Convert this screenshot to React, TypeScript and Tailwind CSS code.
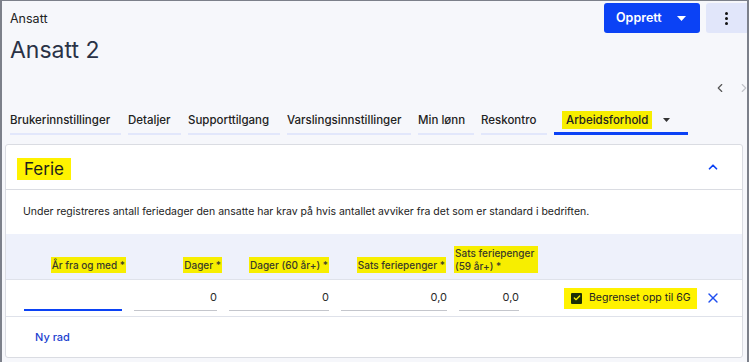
import { ChevronLeft, ChevronRight, ChevronUp, Check, X } from 'lucide-react';

const tabs = [
  { label: 'Brukerinnstillinger', w: 'w-[111px]' },
  { label: 'Detaljer', w: 'w-[53px]' },
  { label: 'Supporttilgang', w: 'w-[92px]' },
  { label: 'Varslingsinnstillinger', w: 'w-[124px]' },
  { label: 'Min lønn', w: 'w-[56px]' },
  { label: 'Reskontro', w: 'w-[66px]' },
];

function NumberInput({ value, width }: { value: string; width: string }) {
  return (
    <div className={`${width} h-[26px] flex items-center justify-end border-b border-[#c4c6cc] text-[11px] text-[#2a2a2a]`}>
      {value}
    </div>
  );
}

export default function App() {
  return (
    <div
      className="w-[749px] h-[362px] overflow-hidden bg-[#f6f7fb] border-t border-l-2 border-r-2 border-[#7c808a] text-[#222]"
      style={{ fontFamily: 'Inter, "Noto Sans", sans-serif' }}
    >
      {/* Top bar */}
      <div className="flex justify-between pt-[2px]">
        <div className="pl-[8px] pt-[8px] text-[12.5px] leading-[16px]">Ansatt</div>
        <div className="flex gap-[6px]">
          <button className="w-[96px] h-[30px] rounded-[3px] bg-[#0b42f5] text-white text-[12.5px] font-semibold flex items-center pl-[12px]">
            <span>Opprett</span>
            <svg className="ml-[15px]" width="9" height="5" viewBox="0 0 9 5">
              <path d="M0 0 H9 L4.5 5 Z" fill="white" />
            </svg>
          </button>
          <button className="w-[41px] h-[30px] rounded-l-[3px] bg-[#e1e6fa] flex flex-col items-center justify-center gap-[2px]">
            <span className="w-[3px] h-[3px] rounded-full bg-[#111]" />
            <span className="w-[3px] h-[3px] rounded-full bg-[#111]" />
            <span className="w-[3px] h-[3px] rounded-full bg-[#111]" />
          </button>
        </div>
      </div>

      <h1 className="pl-[8px] mt-[1px] text-[23px] leading-[32px] text-[#2a3246]">Ansatt 2</h1>

      {/* Scroll arrows */}
      <div className="flex justify-end items-center gap-[10px] mt-[12px] h-[20px]">
        <ChevronLeft className="w-[14px] h-[14px] text-[#555]" strokeWidth={2} />
        <ChevronRight className="w-[14px] h-[14px] text-[#c3c5cb] -mr-[4px]" strokeWidth={2} />
      </div>

      {/* Tabs */}
      <div className="flex gap-[7px] pl-[8px] mt-[10px]">
        {tabs.map((t) => (
          <div
            key={t.label}
            className={`${t.w} pt-[4px] pb-[4px] border-b-2 border-[#e2e7fb] text-[11.5px] font-medium leading-[16px] whitespace-nowrap`}
          >
            {t.label}
          </div>
        ))}
        <div className="w-[134px] pt-[3px] pb-[3px] border-b-[3px] border-[#0b42f5] flex items-center">
          <span className="ml-[8px] bg-[#f7ee00] px-[4px] h-[18px] leading-[18px] text-[11.5px] font-medium">
            Arbeidsforhold
          </span>
          <svg className="ml-[11px]" width="7" height="4" viewBox="0 0 7 4">
            <path d="M0 0 H7 L3.5 4 Z" fill="#333" />
          </svg>
        </div>
      </div>

      {/* Card */}
      <div className="ml-[3px] mt-[9px] w-[738px] h-[214px] bg-white border border-[#dadce2] rounded-[3px]">
        <div className="h-[45px] flex items-center justify-between border-b border-[#dadce2] pl-[11px] pr-[22px]">
          <span className="mt-[3px] bg-[#fff200] px-[7px] h-[22px] leading-[22px] text-[17px] text-[#1d1d1d]">Ferie</span>
          <ChevronUp className="w-[14px] h-[14px] text-[#0b42f5]" strokeWidth={3} />
        </div>

        <div className="h-[44px] flex items-center pl-[17px] text-[10.5px] text-[#222]">
          Under registreres antall feriedager den ansatte har krav på hvis antallet avviker fra det som er standard i bedriften.
        </div>

        {/* Header band */}
        <div className="h-[46px] bg-[#eef1fb] border-b border-[#dfe2ea] flex items-end pb-[6px] pl-[18px] text-[10px] font-medium text-[#3a3a2a]">
          <div className="w-[102px] flex justify-end">
            <span className="bg-[#f7ee00] px-[1px] leading-[16px]">År fra og med *</span>
          </div>
          <div className="w-[96px] flex justify-end">
            <span className="bg-[#f7ee00] px-[1px] leading-[16px]">Dager *</span>
          </div>
          <div className="w-[107px] flex justify-end">
            <span className="bg-[#f7ee00] px-[1px] leading-[16px]">Dager (60 år+) *</span>
          </div>
          <div className="w-[117px] flex justify-end">
            <span className="bg-[#f7ee00] px-[1px] leading-[16px]">Sats feriepenger *</span>
          </div>
          <div className="ml-[8px] w-[84px] bg-[#f7ee00] px-[1px] leading-[12.5px] py-[1px]">
            Sats feriepenger (59 år+) *
          </div>
        </div>

        {/* Row */}
        <div className="h-[37px] border-b border-[#dfe2ea] flex items-center pl-[18px]">
          <div className="w-[98px] h-[26px] border-b-2 border-[#0b42f5]" />
          <div className="ml-[12px]">
            <NumberInput value="0" width="w-[83px]" />
          </div>
          <div className="ml-[12px]">
            <NumberInput value="0" width="w-[100px]" />
          </div>
          <div className="ml-[12px]">
            <NumberInput value="0,0" width="w-[106px]" />
          </div>
          <div className="ml-[12px]">
            <NumberInput value="0,0" width="w-[60px]" />
          </div>
          <div className="ml-[45px] w-[157px] flex items-center justify-between">
            <div className="h-[21px] bg-[#fff200] flex items-center pl-[7px] pr-[6px] gap-[7px] text-[10.5px] text-[#222]">
              <span className="w-[11px] h-[11px] shrink-0 rounded-[1px] bg-[#1c2e06] flex items-center justify-center">
                <Check className="w-[8px] h-[8px] text-[#f7ee00]" strokeWidth={4} />
              </span>
              <span className="whitespace-nowrap">Begrenset opp til 6G</span>
            </div>
            <X className="w-[16px] h-[16px] text-[#1f4ef0]" strokeWidth={2} />
          </div>
        </div>

        <div className="h-[40px] flex items-center pl-[29px] text-[11px] font-medium text-[#1c3fcf]">Ny rad</div>
      </div>
    </div>
  );
}
